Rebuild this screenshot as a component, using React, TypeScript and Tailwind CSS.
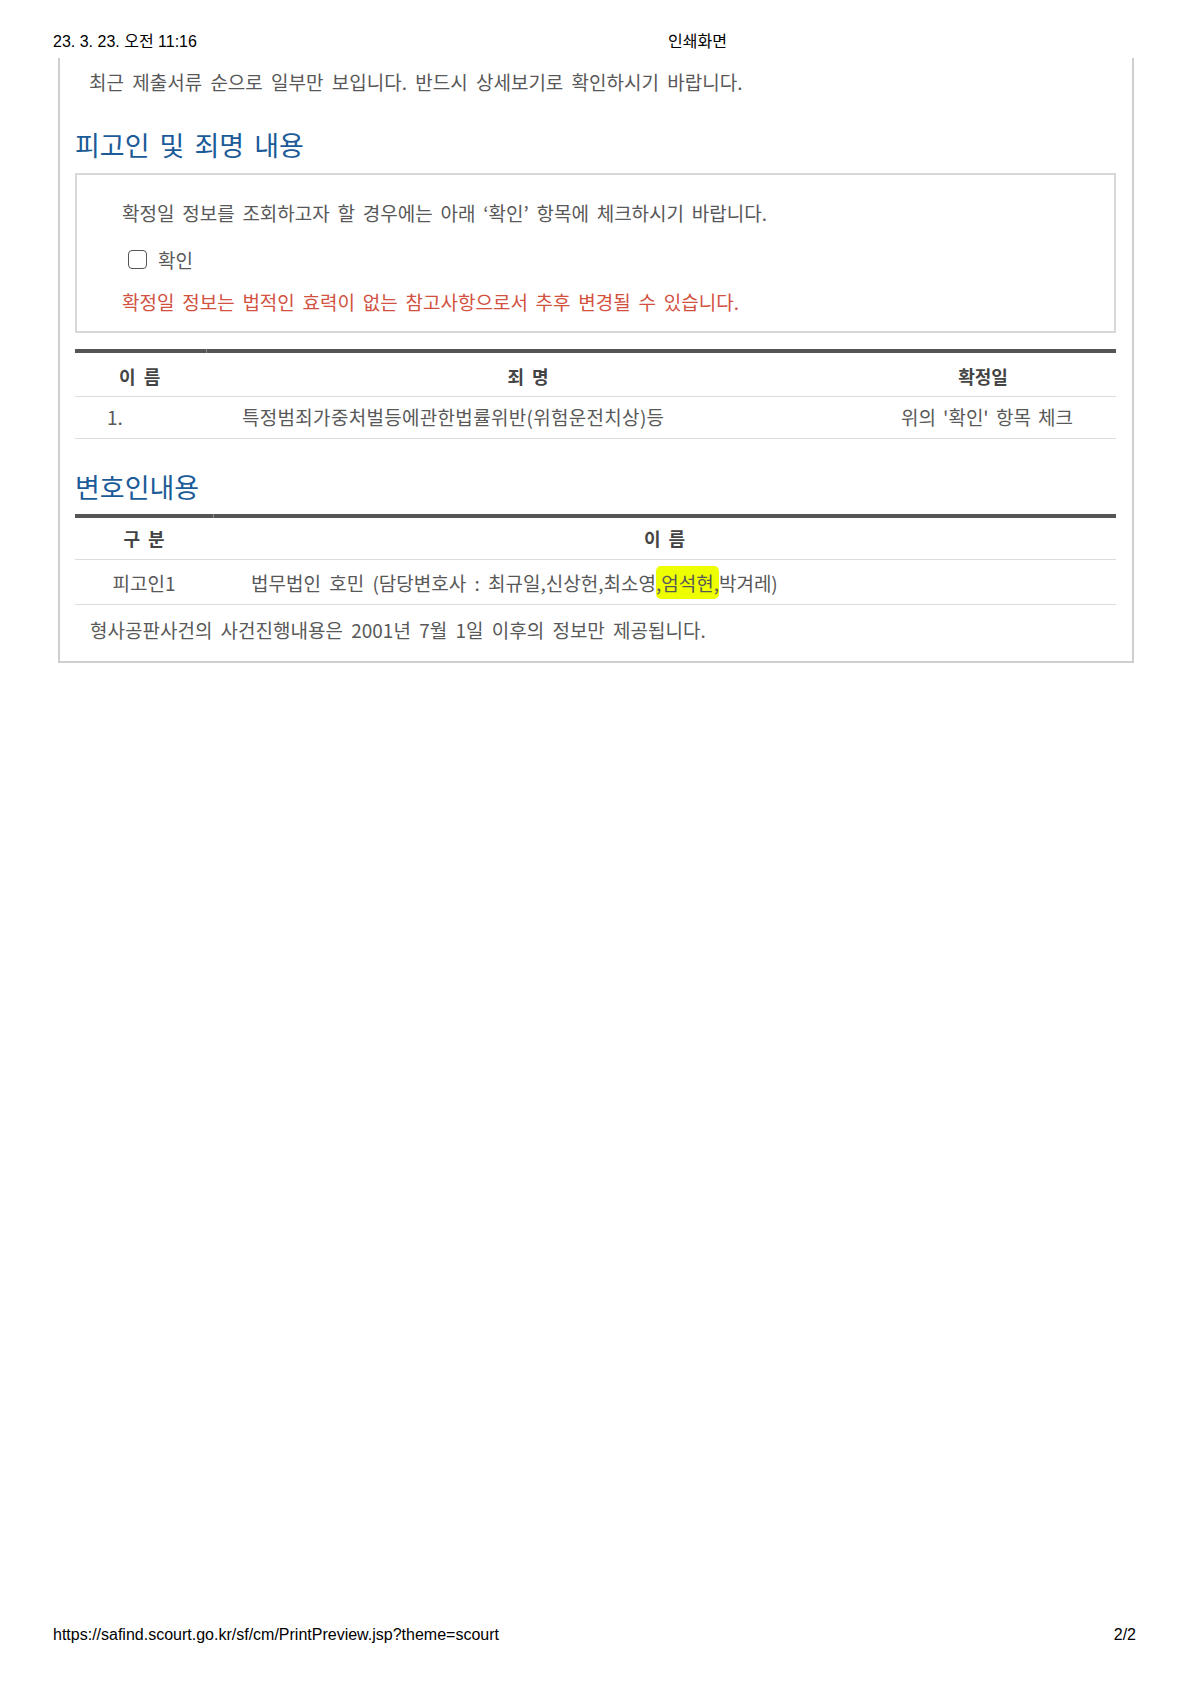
import React from 'react';

const kr = "font-['Noto_Sans_CJK_KR',sans-serif]";

function ThickBar({ split }: { split: number }) {
  return (
    <div className="flex h-[4px]">
      <div className="h-full bg-[#555]" style={{ width: split }} />
      <div className="h-full w-px bg-[#8a8a8a]" />
      <div className="h-full flex-1 bg-[#555]" />
    </div>
  );
}

export default function App() {
  return (
    <div className={`w-[1190px] h-[1684px] bg-white flex flex-col ${kr}`}>
      <header className="flex h-[58px] pt-[33px] pl-[53px] text-[16px] leading-[18px] text-black font-['Liberation_Sans','Noto_Sans_CJK_KR',sans-serif]">
        <span className="w-[615px]">23. 3. 23. 오전 11:16</span>
        <span>인쇄화면</span>
      </header>

      <div className="ml-[58px] w-[1076px] border-x-2 border-b-2 border-[#cfcfcf] pl-[15px] pr-[16px] text-[#585858]">
        <div className="h-[54px] pb-[6px] flex items-center pl-[14px] text-[19px] [word-spacing:4px]">
          최근 제출서류 순으로 일부만 보입니다. 반드시 상세보기로 확인하시기 바랍니다.
        </div>

        <h2 className="h-[61px] pt-[5px] flex items-center text-[27px] text-[#1b5b98] [word-spacing:4px]">
          피고인 및 죄명 내용
        </h2>

        <div className="border-2 border-[#d8d8d8] pl-[45px] pt-[25px] pb-[16px] text-[19px] leading-[26px] [word-spacing:3.5px]">
          <p>확정일 정보를 조회하고자 할 경우에는 아래 ‘확인’ 항목에 체크하시기 바랍니다.</p>
          <label className="mt-[20.5px] flex items-center h-[26px]">
            <span className="ml-[6px] w-[19px] h-[19px] rounded-[4px] border-[1.5px] border-[#555] bg-white" />
            <span className="ml-[11px]">확인</span>
          </label>
          <p className="mt-[16.5px] text-[#d2513f]">
            확정일 정보는 법적인 효력이 없는 참고사항으로서 추후 변경될 수 있습니다.
          </p>
        </div>

        <div className="mt-[16px]">
          <ThickBar split={131} />
          <div className="flex h-[44px] pt-[4px] items-center border-b border-[#dcdcdc] text-[18px] font-bold text-[#444] [word-spacing:4px]">
            <div className="w-[131px] pl-[44px]">이 름</div>
            <div className="w-[644px] text-center">죄 명</div>
            <div className="flex-1 text-center">확정일</div>
          </div>
          <div className="flex h-[42px] items-center border-b border-[#dcdcdc] text-[19px] [word-spacing:4px]">
            <div className="w-[131px] pl-[32px]">1.</div>
            <div className="w-[644px] pl-[36px] tracking-[0.3px]">특정범죄가중처벌등에관한법률위반(위험운전치상)등</div>
            <div className="flex-1 pl-[8px] text-center [word-spacing:3px]">위의 '확인' 항목 체크</div>
          </div>
        </div>

        <h2 className="h-[75px] pt-[21px] flex items-center text-[27px] text-[#1b5b98]">
          변호인내용
        </h2>

        <div>
          <ThickBar split={138} />
          <div className="flex h-[42px] items-center border-b border-[#dcdcdc] text-[18px] font-bold text-[#444] [word-spacing:4px]">
            <div className="w-[138px] text-center">구 분</div>
            <div className="flex-1 text-center">이 름</div>
          </div>
          <div className="flex h-[45px] pt-[3px] items-center border-b border-[#dcdcdc] text-[19px] [word-spacing:4px]">
            <div className="w-[138px] text-center">피고인1</div>
            <div className="flex-1 pl-[38px]">
              법무법인 호민 (담당변호사 : 최규일,신상헌,최소영
              <span className="bg-[#eeff00] rounded-[5px] py-[3px]">,엄석현,</span>
              박겨레)
            </div>
          </div>
        </div>

        <div className="h-[56px] pb-[6px] flex items-center pl-[15px] text-[19px] [word-spacing:4px]">
          형사공판사건의 사건진행내용은 2001년 7월 1일 이후의 정보만 제공됩니다.
        </div>
      </div>

      <div className="flex-1" />

      <footer className="flex justify-between h-[58px] pl-[53px] pr-[54px] text-[16px] leading-[18px] text-black font-['Liberation_Sans',sans-serif]">
        <span>https://safind.scourt.go.kr/sf/cm/PrintPreview.jsp?theme=scourt</span>
        <span>2/2</span>
      </footer>
    </div>
  );
}
